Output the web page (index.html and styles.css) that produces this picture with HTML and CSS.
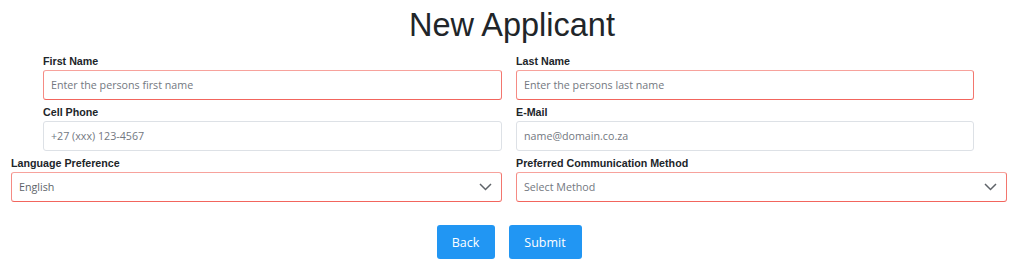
FILE: index.html
```html
<!DOCTYPE html>
<html lang="en">
<head>
<meta charset="utf-8">
<title>New Applicant</title>
<link rel="stylesheet" href="styles.css">
</head>
<body>
<h1 class="title">New Applicant</h1>
<form class="form">
  <div class="field inset-left">
    <label class="label">First Name</label>
    <input class="control invalid" placeholder="Enter the persons first name">
  </div>
  <div class="field inset-right">
    <label class="label">Last Name</label>
    <input class="control invalid" placeholder="Enter the persons last name">
  </div>
  <div class="field inset-left">
    <label class="label">Cell Phone</label>
    <input class="control" placeholder="+27 (xxx) 123-4567">
  </div>
  <div class="field inset-right">
    <label class="label">E-Mail</label>
    <input class="control" placeholder="name@domain.co.za">
  </div>
  <div class="field">
    <label class="label">Language Preference</label>
    <div class="select invalid">
      <span class="value">English</span>
      <svg class="chev" width="13" height="8" viewBox="0 0 13 8"><path d="M1 1l5.5 5.5L12 1" fill="none" stroke="#5f6369" stroke-width="1.5"/></svg>
    </div>
  </div>
  <div class="field">
    <label class="label">Preferred Communication Method</label>
    <div class="select invalid">
      <span class="value muted">Select Method</span>
      <svg class="chev" width="13" height="8" viewBox="0 0 13 8"><path d="M1 1l5.5 5.5L12 1" fill="none" stroke="#5f6369" stroke-width="1.5"/></svg>
    </div>
  </div>
  <div class="actions">
    <button type="button" class="btn btn-back">Back</button>
    <button type="button" class="btn btn-submit">Submit</button>
  </div>
</form>
</body>
</html>
```

FILE: styles.css
```css
html, body {
  margin: 0;
  padding: 0;
  background: #ffffff;
}
body {
  width: 1024px;
  height: 265px;
  overflow: hidden;
  font-family: "Liberation Sans", Arial, sans-serif;
  color: #212529;
}
.title {
  margin: 6px 0 0;
  font-size: 32.5px;
  line-height: 38px;
  font-weight: 400;
  text-align: center;
  color: #212529;
}
.form {
  display: grid;
  grid-template-columns: 1fr 1fr;
  column-gap: 14px;
  padding: 5px 17px 0 11px;
}
.field {
  display: flex;
  flex-direction: column;
}
.inset-left { margin-left: 32px; }
.inset-right { margin-right: 33px; }
.label {
  font-family: "Liberation Sans", Arial, sans-serif;
  font-weight: 700;
  font-size: 10.7px;
  line-height: 14px;
  height: 19px;
  margin-bottom: 2px;
  color: #212529;
  display: flex;
  align-items: flex-end;
}
.control, .select {
  box-sizing: border-box;
  height: 30px;
  width: 100%;
  border: 1px solid #dde1e6;
  border-radius: 3px;
  padding: 0 7px;
  font-family: "Open Sans", "Noto Sans", sans-serif;
  font-size: 10.7px;
  color: #555b62;
  background: #fff;
  outline: none;
  margin: 0;
}
.control::placeholder {
  color: #73787f;
}
.invalid {
  border-color: #f7a29c #f3766e #f2655d #f58b84;
}
.select {
  display: flex;
  align-items: center;
  justify-content: space-between;
  padding-right: 9px;
}
.value { color: #5e646a; }
.value.muted { color: #73787f; }
.chev { display: block; }
.actions {
  grid-column: 1 / -1;
  display: flex;
  justify-content: center;
  gap: 14px;
  margin-top: 23px;
}
.btn {
  height: 34px;
  border: none;
  border-radius: 3px;
  background: #2196f3;
  color: #ffffff;
  font-family: "Open Sans", "Noto Sans", sans-serif;
  font-size: 12.5px;
  padding: 0;
  cursor: pointer;
}
.btn-back { width: 58px; }
.btn-submit { width: 73px; }
```
